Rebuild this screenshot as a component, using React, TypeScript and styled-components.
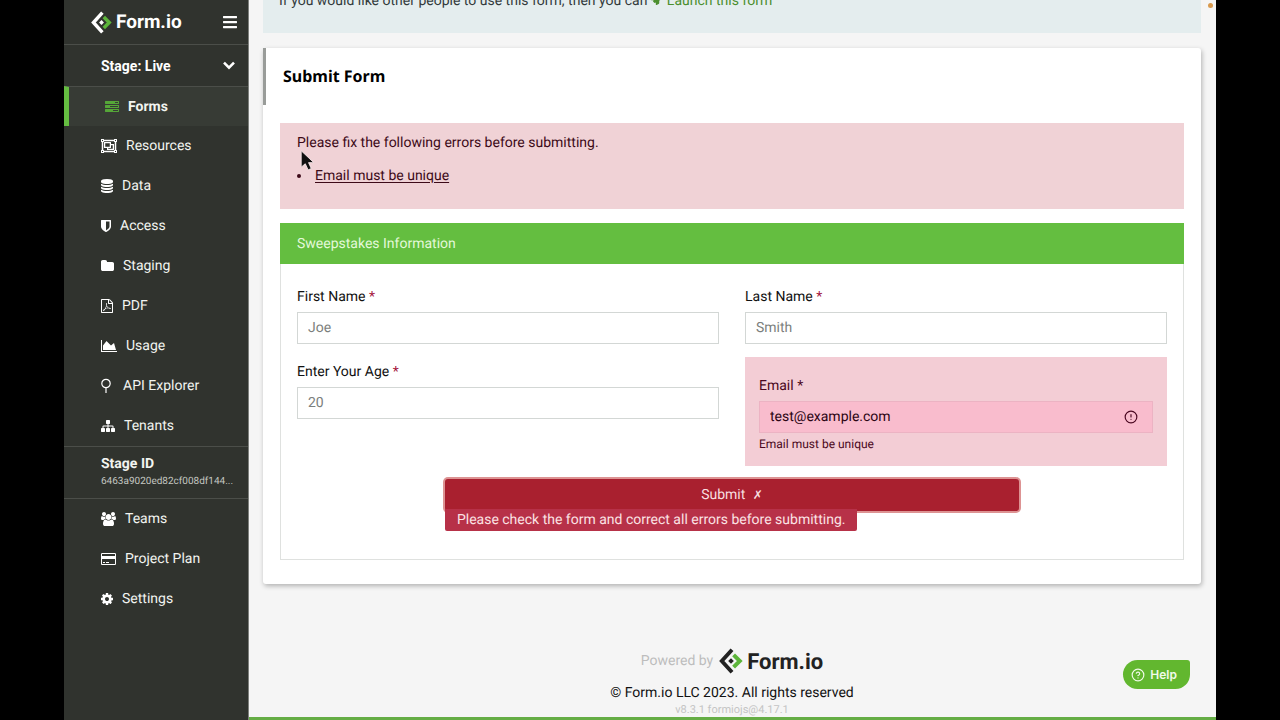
import React from "react";
import styled, { createGlobalStyle } from "styled-components";
import { FaBars, FaRocket, FaRegObjectGroup } from "react-icons/fa";
import { FiAlertCircle, FiHelpCircle } from "react-icons/fi";

const GlobalStyle = createGlobalStyle`
  *, *::before, *::after { box-sizing: border-box; }
  body {
    margin: 0;
    background: #000;
    font-family: Roboto, "Liberation Sans", sans-serif;
    font-size: 14px;
    line-height: 20px;
    color: #111;
    text-rendering: geometricPrecision;
  }
`;

const Page = styled.div`
  display: flex;
  height: 100vh;
  margin: 0 5vw;
  overflow: hidden;
  background: #f5f5f5;
`;

/* ---------- sidebar ---------- */

const Sidebar = styled.aside`
  flex: 0 0 185px;
  min-width: 0;
  background: #30332e;
  border-right: 1px solid #7d807c;
  color: #f2f4f0;
`;

const Brand = styled.div`
  display: flex;
  align-items: center;
  justify-content: space-between;
  height: 45px;
  padding: 0 10px 0 27px;
  border-bottom: 1px solid #4b4e49;
`;

const LogoLink = styled.a<{ $large?: boolean }>`
  display: flex;
  align-items: ${(p) => (p.$large ? "flex-end" : "center")};
  gap: 4px;
  color: ${(p) => (p.$large ? "#222" : "#fff")};
  font-size: ${(p) => (p.$large ? 22 : 19)}px;
  font-weight: 700;
  line-height: ${(p) => (p.$large ? 22 : 24)}px;
  text-decoration: none;
`;

const PlainButton = styled.button`
  display: flex;
  padding: 0;
  border: 0;
  background: none;
  color: #fff;
  font: inherit;
`;

const StageToggle = styled(PlainButton)`
  align-items: center;
  justify-content: space-between;
  width: 100%;
  height: 41px;
  padding: 0 13px 0 37px;
  font-weight: 700;
`;

const NavList = styled.ul`
  margin: 0;
  padding: 0;
  list-style: none;
`;

const NavLink = styled.a<{ $active?: boolean }>`
  display: flex;
  align-items: center;
  gap: 9px;
  height: 40px;
  padding-left: ${(p) => (p.$active ? 36 : 37)}px;
  border-left: ${(p) => (p.$active ? "5px solid #65bd41" : "0")};
  border-top: ${(p) => (p.$active ? "1px solid #4b4e49" : "0")};
  background: ${(p) => (p.$active ? "#373b35" : "none")};
  color: #f2f4f0;
  font-weight: ${(p) => (p.$active ? 700 : 400)};
  text-decoration: none;

  svg {
    color: ${(p) => (p.$active ? "#55a638" : "#fff")};
  }
`;

const StageId = styled.div`
  height: 53px;
  padding: 7px 8px 0 37px;
  border-top: 1px solid #4b4e49;
  border-bottom: 1px solid #4b4e49;
  font-weight: 700;
`;

const StageHash = styled.div`
  color: #c3c6c0;
  font-size: 10px;
  font-weight: 400;
  line-height: 16px;
`;

/* ---------- main column ---------- */

const Main = styled.main`
  position: relative;
  display: flex;
  flex: 1;
  flex-direction: column;
  min-width: 0;
  border-bottom: 3px solid #65ad45;
  overflow: hidden;
`;

const Scrolled = styled.div`
  flex: 1;
  margin-top: -40px;
  padding: 0 15px 0 14px;
`;

const LaunchNotice = styled.div`
  height: 73px;
  margin-bottom: 15px;
  padding: 31px 16px 0;
  background: #e4edee;
  color: #333b3c;
`;

const LaunchLink = styled.a`
  color: #4b8f2e;
  text-decoration: none;

  svg {
    margin-right: 5px;
    font-size: 11px;
  }
`;

const Card = styled.section`
  border-radius: 3px;
  background: #fff;
  box-shadow: 1px 2px 5px rgba(0, 0, 0, 0.28);
`;

const CardTitle = styled.h2`
  height: 57px;
  margin: 0;
  padding: 0 17px;
  border-left: 3px solid #999c99;
  color: #000;
  font: 700 16px/56px "Noto Sans", "Open Sans", sans-serif;
`;

const CardBody = styled.div`
  padding: 18px 17px 24px;
`;

const ErrorSummary = styled.div`
  position: relative;
  height: 86px;
  margin-bottom: 14px;
  padding: 10px 17px;
  background: #f0d2d6;
  color: #3d0a18;

  p { margin: 0 0 13px; }
  ul { margin: 0; padding-left: 15px; }
  li { padding-left: 3px; }
  a { color: inherit; text-underline-offset: 2px; }
`;

const Cursor = styled.svg`
  position: absolute;
  left: 20px;
  top: 26px;
`;

const Panel = styled.div`
  border: 1px solid #dfe1df;
  border-top: 0;
`;

const PanelTitle = styled.div`
  margin: 0 -1px;
  padding: 2px 17px 0;
  background: #64be40;
  color: #e3f8d9;
  line-height: 39px;
`;

const Form = styled.form`
  display: grid;
  grid-template-columns: 1fr 1fr;
  align-items: start;
  gap: 13px 26px;
  padding: 18px 16px 48px;
`;

const Field = styled.div<{ $invalid?: boolean }>`
  display: flex;
  flex-direction: column;
  gap: 5px;
  padding: ${(p) => (p.$invalid ? "19px 14px 12px" : "5px 0 0")};
  background: ${(p) => (p.$invalid ? "#f3cdd5" : "none")};
  color: ${(p) => (p.$invalid ? "#4a0720" : "#111")};
`;

const Required = styled.span<{ $invalid?: boolean }>`
  color: ${(p) => (p.$invalid ? "inherit" : "#a3123a")};
`;

const InputBox = styled.div<{ $invalid?: boolean }>`
  display: flex;
  align-items: center;
  height: 32px;
  padding: 0 ${(p) => (p.$invalid ? 14 : 10)}px 0 10px;
  border: 1px solid ${(p) => (p.$invalid ? "#ecb3c3" : "#d3d7d5")};
  background: ${(p) => (p.$invalid ? "#f9bccd" : "#fff")};
`;

const Input = styled.input`
  flex: 1;
  min-width: 0;
  padding: 0;
  border: 0;
  outline: 0;
  background: none;
  color: #2b0514;
  font: inherit;
  text-rendering: inherit;

  &::placeholder {
    color: #7c7f7d;
    opacity: 1;
  }
`;

const FieldError = styled.div`
  margin-top: -4px;
  font-size: 12px;
`;

const SubmitRow = styled.div`
  position: relative;
  grid-column: 1 / -1;
  margin: 0 17%;
`;

const SubmitButton = styled.button`
  display: block;
  width: 100%;
  height: 32px;
  border: 0;
  border-radius: 3px;
  background: #a9202f;
  box-shadow: 0 0 0 2px #dd9393;
  color: #f8dfe0;
  font: inherit;
  text-rendering: inherit;
`;

const Mark = styled.span`
  margin-left: 4px;
  font-size: 12px;
`;

const SubmitMessage = styled.div`
  position: absolute;
  top: 30px;
  left: 0;
  padding: 1px 12px;
  border-radius: 0 0 2px 2px;
  background: #b73148;
  color: #fbe2e4;
  white-space: nowrap;
`;

const Footer = styled.footer`
  display: flex;
  flex-direction: column;
  align-items: center;
  padding-top: 64px;
`;

const PoweredBy = styled.div`
  display: flex;
  align-items: center;
  gap: 6px;
  margin-bottom: 9px;
  color: #bdbdbd;
`;

const Version = styled.small`
  color: #c4c4c4;
  font-size: 11px;
  line-height: 14px;
`;

const HelpButton = styled.button`
  position: absolute;
  right: 26px;
  bottom: 28px;
  display: flex;
  align-items: center;
  gap: 5px;
  height: 29px;
  padding: 0 13px 0 8px;
  border: 0;
  border-radius: 15px 3px 15px 15px;
  background: #62b72f;
  color: #f1fae9;
  font: 600 12px/20px Inter, Roboto, sans-serif;
`;

const RecordingDot = styled.span`
  position: absolute;
  top: 3px;
  right: 3px;
  width: 5px;
  height: 5px;
  border-radius: 50%;
  background: #d99a4e;
`;

/* ---------- drawings ---------- */

function Logo({ large }: { large?: boolean }) {
  return (
    <LogoLink href="#" $large={large}>
      <svg width={large ? 24 : 21} height={large ? 26 : 23} viewBox="0 0 24 26" fill="none">
        <path d="M13 1.8 L2.8 13 L13 24.2" stroke="currentColor" strokeWidth="3.9" />
        <path d="M14.6 6.8 L20.8 13 L14.6 19.2" stroke="#5cb53a" strokeWidth="4" />
        <path d="M12 10.2 L14.8 13 L12 15.8 L9.2 13 Z" fill="currentColor" />
      </svg>
      Form.io
    </LogoLink>
  );
}

const glyphs = {
  tasks: {
    box: [0, 1792],
    d: "M1024 1408h640v-128h-640v128zm-384-512h1024v-128h-1024v128zm640-512h384v-128h-384v128zm512 832v256q0 26-19 45t-45 19h-1664q-26 0-45-19t-19-45v-256q0-26 19-45t45-19h1664q26 0 45 19t19 45zm0-512v256q0 26-19 45t-45 19h-1664q-26 0-45-19t-19-45v-256q0-26 19-45t45-19h1664q26 0 45 19t19 45zm0-512v256q0 26-19 45t-45 19h-1664q-26 0-45-19t-19-45v-256q0-26 19-45t45-19h1664q26 0 45 19t19 45z",
  },
  database: {
    box: [128, 1536],
    d: "M896 768q237 0 443-43t325-127v170q0 69-103 128t-280 93.5-385 34.5-385-34.5-280-93.5-103-128v-170q119 84 325 127t443 43zm0 768q237 0 443-43t325-127v170q0 69-103 128t-280 93.5-385 34.5-385-34.5-280-93.5-103-128v-170q119 84 325 127t443 43zm0-384q237 0 443-43t325-127v170q0 69-103 128t-280 93.5-385 34.5-385-34.5-280-93.5-103-128v-170q119 84 325 127t443 43zm0-1152q208 0 385 34.5t280 93.5 103 128v128q0 69-103 128t-280 93.5-385 34.5-385-34.5-280-93.5-103-128v-128q0-69 103-128t280-93.5 385-34.5z",
  },
  shield: {
    box: [256, 1280],
    d: "M1344 960v-640h-448v1137q119-63 213-137 235-184 235-360zm192-768v768q0 86-33.5 170.5t-83 150-118 127.5-126.5 103-121 77.5-89.5 49.5-42.5 20q-12 6-26 6t-26-6q-16-7-42.5-20t-89.5-49.5-121-77.5-126.5-103-118-127.5-83-150-33.5-170.5v-768q0-26 19-45t45-19h1152q26 0 45 19t19 45z",
  },
  folder: {
    box: [64, 1664],
    d: "M1728 608v704q0 92-66 158t-158 66h-1216q-92 0-158-66t-66-158v-960q0-92 66-158t158-66h320q92 0 158 66t66 158v32h672q92 0 158 66t66 158z",
  },
  pdf: {
    box: [128, 1536],
    d: "M1596 380q28 28 48 76t20 88v1152q0 40-28 68t-68 28h-1344q-40 0-68-28t-28-68v-1600q0-40 28-68t68-28h896q40 0 88 20t76 48zm-444-244v376h376q-10-29-22-41l-313-313q-12-12-41-22zm384 1528v-1024h-416q-40 0-68-28t-28-68v-416h-768v1536h1280zm-514-593q33 26 84 56 59-7 117-7 147 0 177 49 16 22 2 52 0 1-1 2l-2 2v1q-6 38-71 38-48 0-115-20t-130-53q-221 24-392 83-153 262-242 262-15 0-28-7l-24-12q-1-1-6-5-10-10-6-36 9-40 56-91.5t132-96.5q14-9 23 6 2 2 2 4 52-85 107-197 68-136 104-262-24-82-30.5-159.5t6.5-127.5q11-40 42-40h22q23 0 35 15 18 21 9 68-2 6-4 8 1 3 1 8v30q-2 123-14 192 55 164 146 238zm-576 411q52-24 137-158-51 40-87.5 84t-49.5 74zm398-920q-15 42-2 132 1-7 7-44 0-3 7-43 1-4 4-8-1-1-1-2-1-2-1-3-1-22-13-36 0 1-1 2v2zm-124 661q135-54 284-81-2-1-13-9.5t-16-13.5q-76-67-127-176-27 86-83 197-30 56-45 83zm646-16q-24-24-140-24 76 28 124 28 14 0 18-1 0-1-2-3z",
  },
  chart: {
    box: [0, 2048],
    d: "M2048 1536v128h-2048v-1536h128v1408h1920zm-384-1024l256 896h-1664v-576l448-576 576 576z",
  },
  sitemap: {
    box: [0, 1792],
    d: "M1792 1248v320q0 40-28 68t-68 28h-320q-40 0-68-28t-28-68v-320q0-40 28-68t68-28h96v-192h-512v192h96q40 0 68 28t28 68v320q0 40-28 68t-68 28h-320q-40 0-68-28t-28-68v-320q0-40 28-68t68-28h96v-192h-512v192h96q40 0 68 28t28 68v320q0 40-28 68t-68 28h-320q-40 0-68-28t-28-68v-320q0-40 28-68t68-28h96v-192q0-52 38-90t90-38h512v-192h-96q-40 0-68-28t-28-68v-320q0-40 28-68t68-28h320q40 0 68 28t28 68v320q0 40-28 68t-68 28h-96v192h512q52 0 90 38t38 90v192h96q40 0 68 28t28 68z",
  },
  users: {
    box: [0, 1920],
    d: "M593 896q-162 5-265 128h-134q-82 0-138-40.5t-56-118.5q0-353 124-353 6 0 43.5 21t97.5 42.5 119 21.5q67 0 133-23-5 37-5 66 0 139 81 256zm1071 637q0 120-73 189.5t-194 69.5h-874q-121 0-194-69.5t-73-189.5q0-53 3.5-103.5t14-109 26.5-108.5 43-97.5 62-81 85.5-53.5 111.5-20q10 0 43 21.5t73 48 107 48 135 21.5 135-21.5 107-48 73-48 43-21.5q61 0 111.5 20t85.5 53.5 62 81 43 97.5 26.5 108.5 14 109 3.5 103.5zm-1024-1277q0 106-75 181t-181 75-181-75-75-181 75-181 181-75 181 75 75 181zm704 384q0 159-112.5 271.5t-271.5 112.5-271.5-112.5-112.5-271.5 112.5-271.5 271.5-112.5 271.5 112.5 112.5 271.5zm576 225q0 78-56 118.5t-138 40.5h-134q-103-123-265-128 81-117 81-256 0-29-5-66 66 23 133 23 59 0 119-21.5t97.5-42.5 43.5-21q124 0 124 353zm-128-609q0 106-75 181t-181 75-181-75-75-181 75-181 181-75 181 75 75 181z",
  },
  card: {
    box: [0, 1920],
    d: "M1760 128q66 0 113 47t47 113v1216q0 66-47 113t-113 47h-1600q-66 0-113-47t-47-113v-1216q0-66 47-113t113-47h1600zm-1600 128q-13 0-22.5 9.5t-9.5 22.5v224h1664v-224q0-13-9.5-22.5t-22.5-9.5h-1600zm1600 1280q13 0 22.5-9.5t9.5-22.5v-608h-1664v608q0 13 9.5 22.5t22.5 9.5h1600zm-1504-128v-128h256v128h-256zm384 0v-128h384v128h-384z",
  },
  cog: {
    box: [128, 1536],
    d: "M1152 896q0-106-75-181t-181-75-181 75-75 181 75 181 181 75 181-75 75-181zm512-109v222q0 12-8 23t-20 13l-185 28q-19 54-39 91 35 50 107 138 10 12 10 25t-9 23q-27 37-99 108t-94 71q-12 0-26-9l-138-108q-44 23-91 38-16 136-29 186-7 28-36 28h-222q-14 0-24.5-8.5t-11.5-21.5l-28-184q-49-16-90-37l-141 107q-10 9-25 9-14 0-25-11-126-114-165-168-7-10-7-23 0-12 8-23 15-21 51-66.5t54-70.5q-27-50-41-99l-183-27q-13-2-21-12.5t-8-23.5v-222q0-12 8-23t19-13l186-28q14-46 39-92-40-57-107-138-10-12-10-24 0-10 9-23 26-36 98.5-107.5t94.5-71.5q13 0 26 10l138 107q44-23 91-38 16-136 29-186 7-28 36-28h222q14 0 24.5 8.5t11.5 21.5l28 184q49 16 90 37l142-107q9-9 24-9 13 0 25 10 129 119 165 170 7 8 7 22 0 12-8 23-15 21-51 66.5t-54 70.5q26 50 41 98l183 28q13 2 21 12.5t8 23.5z",
  },
};

function Glyph({ name }: { name: keyof typeof glyphs }) {
  const { box, d } = glyphs[name];
  return (
    <svg width={Math.round(box[1] / 128)} height="14" viewBox={`${box[0]} 0 ${box[1]} 1792`} fill="currentColor" aria-hidden>
      <path d={d} />
    </svg>
  );
}

function PinIcon() {
  return (
    <svg width="13" height="16" viewBox="0 0 13 16" fill="none" stroke="currentColor" strokeWidth="1.2" aria-hidden>
      <circle cx="5" cy="5.5" r="4.2" />
      <path d="M5 9.7V15" />
    </svg>
  );
}

const mainNav = [
  { label: "Forms", icon: <Glyph name="tasks" />, active: true },
  { label: "Resources", icon: <FaRegObjectGroup size={16} /> },
  { label: "Data", icon: <Glyph name="database" /> },
  { label: "Access", icon: <Glyph name="shield" /> },
  { label: "Staging", icon: <Glyph name="folder" /> },
  { label: "PDF", icon: <Glyph name="pdf" /> },
  { label: "Usage", icon: <Glyph name="chart" /> },
  { label: "API Explorer", icon: <PinIcon /> },
  { label: "Tenants", icon: <Glyph name="sitemap" /> },
];

const projectNav = [
  { label: "Teams", icon: <Glyph name="users" /> },
  { label: "Project Plan", icon: <Glyph name="card" /> },
  { label: "Settings", icon: <Glyph name="cog" /> },
];

function Nav({ items }: { items: { label: string; icon: React.ReactNode; active?: boolean }[] }) {
  return (
    <NavList>
      {items.map((item) => (
        <li key={item.label}>
          <NavLink href="#" $active={item.active}>
            {item.icon}
            {item.label}
          </NavLink>
        </li>
      ))}
    </NavList>
  );
}

function TextField(props: { id: string; label: string; placeholder?: string; value?: string; error?: string }) {
  const invalid = Boolean(props.error);
  return (
    <Field $invalid={invalid}>
      <label htmlFor={props.id}>
        {props.label} <Required $invalid={invalid}>*</Required>
      </label>
      <InputBox $invalid={invalid}>
        <Input id={props.id} placeholder={props.placeholder} defaultValue={props.value} />
        {invalid && <FiAlertCircle size={14} />}
      </InputBox>
      {invalid && <FieldError>{props.error}</FieldError>}
    </Field>
  );
}

export default function App() {
  return (
    <Page>
      <GlobalStyle />
      <Sidebar>
        <Brand>
          <Logo />
          <PlainButton aria-label="Menu">
            <FaBars size={16} />
          </PlainButton>
        </Brand>
        <StageToggle>
          Stage: Live
          <svg width="12" height="9" viewBox="0 0 12 9" fill="none" stroke="#fff" strokeWidth="2.6" aria-hidden>
            <path d="M1 1.6 L6 6.6 L11 1.6" />
          </svg>
        </StageToggle>
        <Nav items={mainNav} />
        <StageId>
          Stage ID
          <StageHash>6463a9020ed82cf008df144...</StageHash>
        </StageId>
        <Nav items={projectNav} />
      </Sidebar>

      <Main>
        <Scrolled>
          <LaunchNotice>
            If you would like other people to use this form, then you can{" "}
            <LaunchLink href="#">
              <FaRocket />
              Launch this form
            </LaunchLink>
          </LaunchNotice>

          <Card>
            <CardTitle>Submit Form</CardTitle>
            <CardBody>
              <ErrorSummary>
                <p>Please fix the following errors before submitting.</p>
                <ul>
                  <li>
                    <a href="#email">Email must be unique</a>
                  </li>
                </ul>
                <Cursor width="16" height="25" viewBox="0 0 14 22" aria-hidden>
                  <path
                    d="M1 1.5V16l3.6-3 2.5 5.4 2.8-1.2-2.4-5.2h4.6z"
                    fill="#111"
                    stroke="#f5e6e8"
                    strokeWidth="0.8"
                  />
                </Cursor>
              </ErrorSummary>

              <Panel>
                <PanelTitle>Sweepstakes Information</PanelTitle>
                <Form onSubmit={(e) => e.preventDefault()}>
                  <TextField id="first-name" label="First Name" placeholder="Joe" />
                  <TextField id="last-name" label="Last Name" placeholder="Smith" />
                  <TextField id="age" label="Enter Your Age" placeholder="20" />
                  <TextField id="email" label="Email" value="test@example.com" error="Email must be unique" />
                  <SubmitRow>
                    <SubmitButton type="submit">
                      Submit <Mark>✗</Mark>
                    </SubmitButton>
                    <SubmitMessage>Please check the form and correct all errors before submitting.</SubmitMessage>
                  </SubmitRow>
                </Form>
              </Panel>
            </CardBody>
          </Card>

          <Footer>
            <PoweredBy>
              Powered by
              <Logo large />
            </PoweredBy>
            <div>© Form.io LLC 2023. All rights reserved</div>
            <Version>v8.3.1 formiojs@4.17.1</Version>
          </Footer>
        </Scrolled>

        <RecordingDot />
        <HelpButton>
          <FiHelpCircle size={14} />
          Help
        </HelpButton>
      </Main>
    </Page>
  );
}
